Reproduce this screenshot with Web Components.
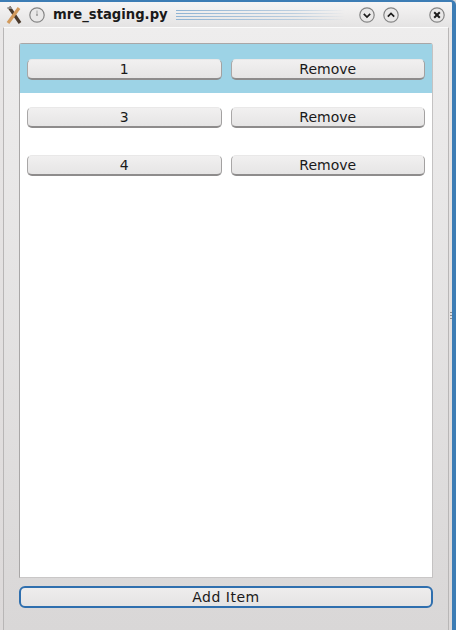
<!DOCTYPE html>
<html>
<head>
<meta charset="utf-8">
<title>mre_staging.py</title>
<style>
  html, body { margin: 0; padding: 0; background: #dcdada; }
  body { font-family: "DejaVu Sans", sans-serif; width: 456px; height: 630px; overflow: hidden; }
</style>
</head>
<body>
<app-window window-title="mre_staging.py">
  <item-list>
    <item-row selected label="1"></item-row>
    <item-row label="3"></item-row>
    <item-row label="4"></item-row>
  </item-list>
  <push-button slot="footer" focused>Add Item</push-button>
</app-window>

<script>
"use strict";

class PushButton extends HTMLElement {
  constructor() {
    super();
    this.attachShadow({ mode: "open" });
  }

  connectedCallback() {
    this.shadowRoot.innerHTML = `
      <style>
        :host {
          display: flex;
          flex: 1 1 0;
          min-width: 0;
          height: 21px;
          box-sizing: border-box;
          align-items: center;
          justify-content: center;
          border-radius: 5px;
          border: 1px solid #e9e8e8;
          border-bottom: 2px solid #8e8c8c;
          border-left-color: #a9a7a7;
          border-right-color: #a3a1a1;
          background: linear-gradient(#f1f0f0, #e6e5e5);
          font-size: 14px;
          color: #1a1a1a;
        }
        :host([focused]) {
          height: 22px;
          border: 2px solid #2f6fae;
          border-radius: 6px;
          background: linear-gradient(#eeeded, #e5e4e4);
          letter-spacing: 0.5px;
        }
      </style>
      <slot></slot>
    `;
  }
}

class ItemRow extends HTMLElement {
  constructor() {
    super();
    this.attachShadow({ mode: "open" });
  }

  connectedCallback() {
    const label = this.getAttribute("label");
    this.shadowRoot.innerHTML = `
      <style>
        :host {
          display: flex;
          gap: 9px;
          height: 48px;
          box-sizing: border-box;
          padding: 14px 7px 0;
          background: #fff;
        }
        :host([selected]) {
          height: 49px;
          padding-top: 15px;
          background: #9dd3e6;
        }
      </style>
      <push-button>${label}</push-button>
      <push-button>Remove</push-button>
    `;
  }
}

class ItemList extends HTMLElement {
  constructor() {
    super();
    this.attachShadow({ mode: "open" });
  }

  connectedCallback() {
    this.shadowRoot.innerHTML = `
      <style>
        :host {
          display: block;
          flex: 1;
          box-sizing: border-box;
          background: #fff;
          border: 1px solid #a9a7a7;
          border-bottom-color: #c9c7c7;
          border-right-color: #c4c2c2;
          border-radius: 3px 3px 0 0;
        }
      </style>
      <slot></slot>
    `;
  }
}

class TitleButton extends HTMLElement {
  constructor() {
    super();
    this.attachShadow({ mode: "open" });
  }

  connectedCallback() {
    const glyphs = {
      down: '<path d="M4.8 6.8 L8 10 L11.2 6.8" fill="none" stroke="#1c1c1c" stroke-width="1.7"/>',
      up: '<path d="M4.8 9.6 L8 6.4 L11.2 9.6" fill="none" stroke="#1c1c1c" stroke-width="1.7"/>',
      close: '<path d="M5.2 5.2 L10.8 10.8 M10.8 5.2 L5.2 10.8" fill="none" stroke="#1c1c1c" stroke-width="2"/>',
      pin: '<path d="M8 3.5 V8" stroke="#a5a5a5" stroke-width="1" fill="none"/><circle cx="8" cy="8" r="1" fill="#9a9a9a"/>'
    };
    const glyph = glyphs[this.getAttribute("icon")];
    this.shadowRoot.innerHTML = `
      <style>
        :host { display: block; width: 16px; height: 16px; flex: none; }
        svg { display: block; }
      </style>
      <svg width="16" height="16" viewBox="0 0 16 16">
        <circle cx="8" cy="8" r="7.2" fill="#e9e8e8" stroke="#858585" stroke-width="1.2"/>
        ${glyph}
      </svg>
    `;
  }
}

class AppWindow extends HTMLElement {
  constructor() {
    super();
    this.attachShadow({ mode: "open" });
  }

  connectedCallback() {
    const title = this.getAttribute("window-title");
    this.shadowRoot.innerHTML = `
      <style>
        :host {
          display: flex;
          flex-direction: column;
          width: 456px;
          height: 630px;
          box-sizing: border-box;
          border-top: 2px solid #3d7db5;
          border-right: 4px solid #3d7db5;
          border-top-right-radius: 5px;
          background: #dcdada;
          overflow: hidden;
        }
        .titlebar {
          display: flex;
          align-items: center;
          height: 25px;
          flex: none;
          padding: 0 7px 0 6px;
          box-sizing: border-box;
          background: linear-gradient(#f6f5f5, #e4e3e3);
        }
        .logo { flex: none; margin-right: 6px; }
        .name {
          margin-left: 8px;
          font-size: 13.2px;
          font-weight: bold;
          color: #1a1a1a;
          flex: none;
        }
        .stripes {
          flex: 1;
          height: 10px;
          margin: 0 14px 0 8px;
          background:
            repeating-linear-gradient(#8fb3d3 0 1px, transparent 1px 3px);
          -webkit-mask-image: linear-gradient(90deg, #000, #0008 70%, transparent);
          mask-image: linear-gradient(90deg, #000, #0008 70%, transparent);
        }
        .up { margin-left: 8px; }
        .close { margin-left: 30px; }
        .frame {
          flex: 1;
          min-height: 0;
          display: flex;
          padding: 0 3px;
          background: linear-gradient(#e9e7e7, #dcd9d9);
        }
        .frame-inner {
          flex: 1;
          display: flex;
          flex-direction: column;
          min-width: 0;
          padding: 15px 15px 22px;
          gap: 8px;
          box-sizing: border-box;
          border-left: 1px solid #b8b6b6;
          border-right: 1px solid #b8b6b6;
          border-top: 1px solid #fbfbfb;
          background: linear-gradient(#eeeded, #d9d7d7);
        }
        ::slotted([slot="footer"]) { flex: none; }
        .grip {
          position: absolute;
          left: 450px;
          top: 312px;
          width: 2px;
          height: 7px;
          background: repeating-linear-gradient(#8f8d8d 0 1px, transparent 1px 3px);
        }
      </style>
      <div class="titlebar">
        <svg class="logo" width="17" height="18" viewBox="0 0 17 18">
          <path d="M3 1 L14 17" stroke="#4a3a2c" stroke-width="3.2" fill="none"/>
          <path d="M13 2 L2 17" stroke="#d29a5c" stroke-width="3.2" fill="none"/>
          <path d="M1 2 L6 2" stroke="#a5a5a5" stroke-width="1.6" fill="none"/>
        </svg>
        <title-button icon="pin"></title-button>
        <span class="name">${title}</span>
        <div class="stripes"></div>
        <title-button icon="down"></title-button>
        <title-button class="up" icon="up"></title-button>
        <title-button class="close" icon="close"></title-button>
      </div>
      <div class="frame">
        <div class="frame-inner">
          <slot></slot>
          <slot name="footer"></slot>
        </div>
      </div>
      <div class="grip"></div>
    `;
  }
}

customElements.define("push-button", PushButton);
customElements.define("item-row", ItemRow);
customElements.define("item-list", ItemList);
customElements.define("title-button", TitleButton);
customElements.define("app-window", AppWindow);
</script>
</body>
</html>
